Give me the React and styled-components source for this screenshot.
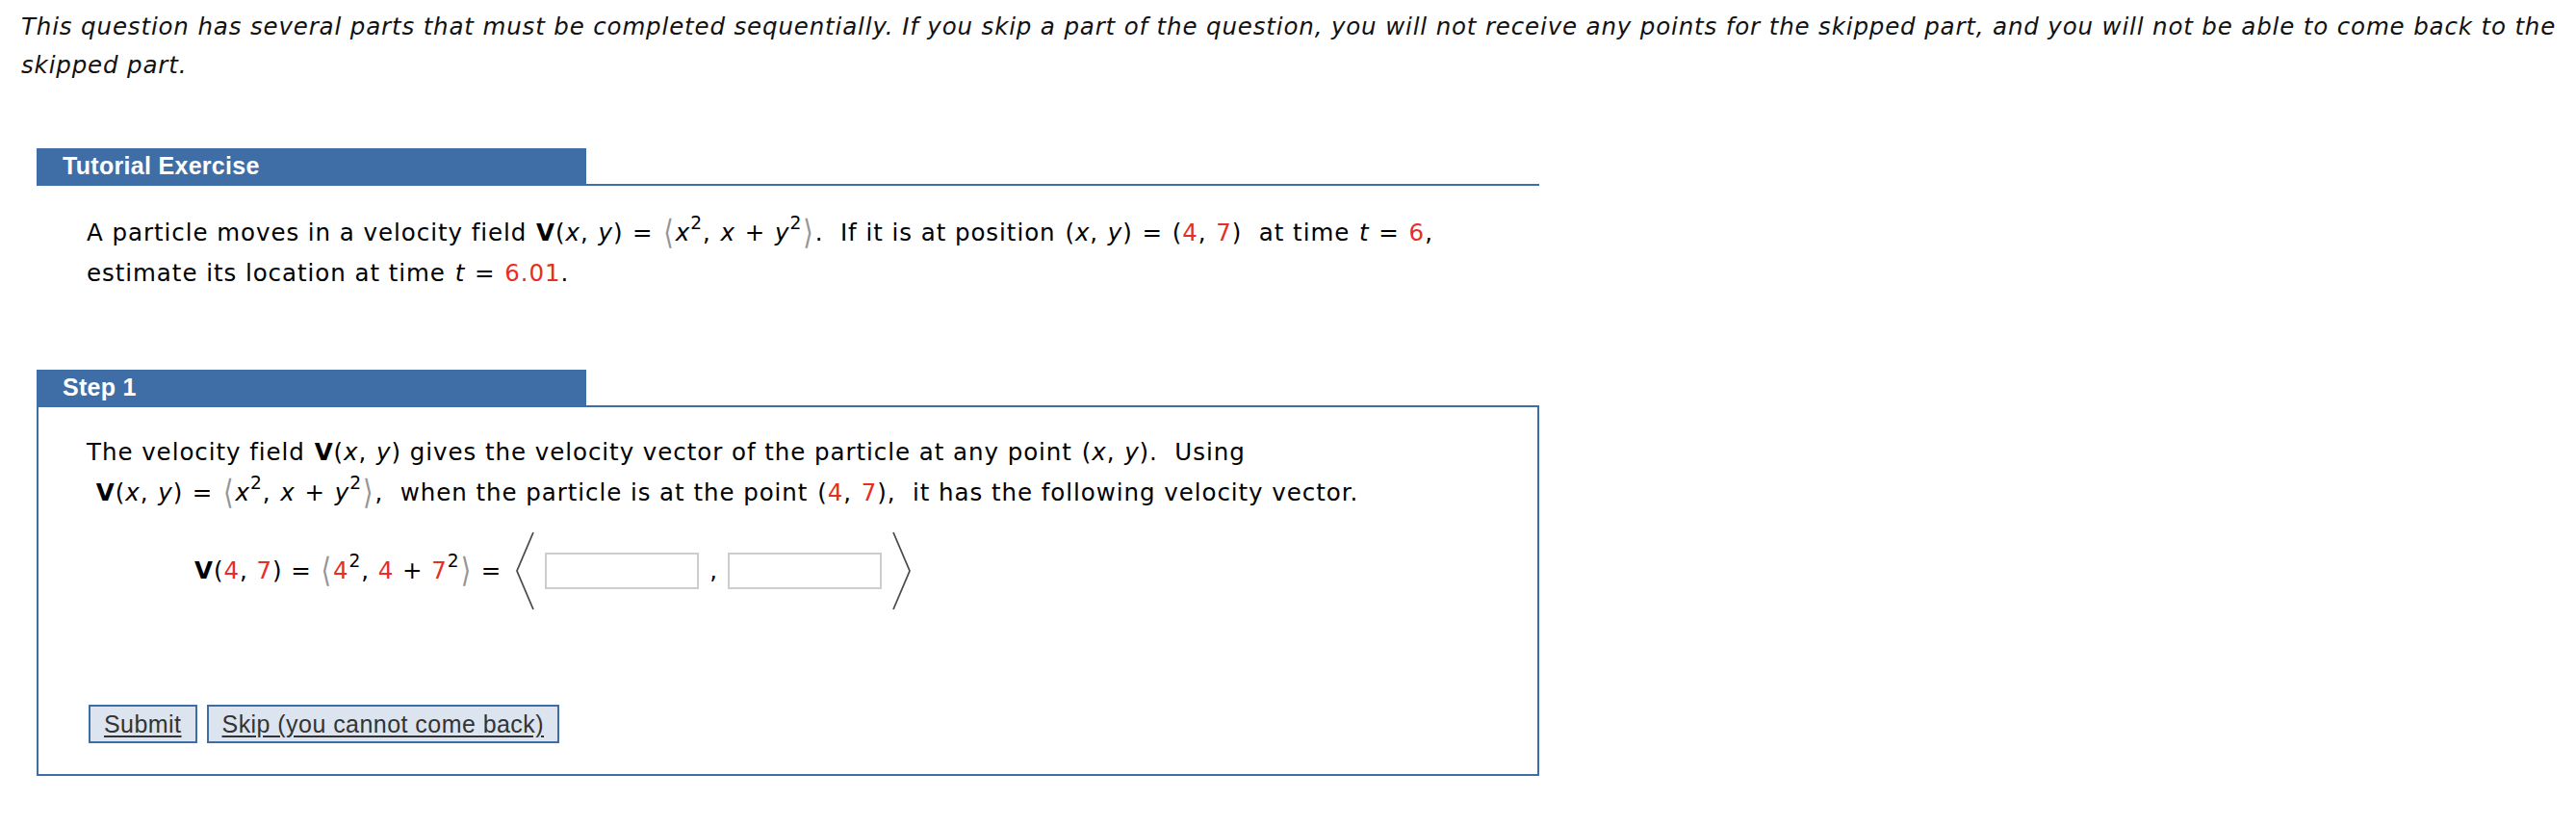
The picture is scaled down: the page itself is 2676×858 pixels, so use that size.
import styled, { createGlobalStyle } from "styled-components";

const GlobalStyle = createGlobalStyle`
  html, body {
    margin: 0;
    background: #fff;
    overflow: hidden;
  }
  body {
    font-family: "DejaVu Sans", Verdana, sans-serif;
    color: #000;
  }
`;

const BLUE = "#3f6ea6";
const RED = "#e62e24";

const Page = styled.div`
  padding: 8px 0 0 22px;
`;

const Intro = styled.p`
  margin: 0;
  font-size: 24.5px;
  line-height: 40px;
  letter-spacing: 0.85px;
  font-style: italic;
  color: #111;
  white-space: nowrap;
`;

const Section = styled.section`
  width: 1561px;
  margin: ${(p) => p.$top}px 0 0 16px;
`;

const Header = styled.div`
  display: flex;
  border-bottom: 2px solid ${BLUE};
`;

const Tab = styled.div`
  width: 571px;
  height: 37px;
  box-sizing: border-box;
  padding-left: 27px;
  background: ${BLUE};
  color: #fff;
  font-family: "Liberation Sans", Arial, sans-serif;
  font-weight: bold;
  font-size: 25px;
  letter-spacing: 0.3px;
  line-height: 37px;
`;

const Problem = styled.div`
  padding: 28px 0 0 52px;
`;

const StepBox = styled.div`
  border: 2px solid ${BLUE};
  border-top: none;
  padding: 26px 0 32px 50px;
`;

const Text = styled.p`
  margin: 0;
  font-size: 24.5px;
  line-height: 42px;
  letter-spacing: 0.95px;
  white-space: nowrap;
`;

const Math = styled.span`
  white-space: nowrap;
  margin-left: 0.4em;
  word-spacing: 1px;
`;

const Var = styled.i`
  font-style: italic;
`;

const Bold = styled.b`
  font-weight: bold;
`;

const Red = styled.span`
  color: ${RED};
`;

const Sup = styled.sup`
  font-size: 0.76em;
  vertical-align: 0.62em;
  line-height: 0;
`;

const Angle = styled.span`
  display: inline-block;
  color: #959595;
  font-size: 1.1em;
  line-height: 1;
  margin: 0 1px;
  transform: scaleY(1.3);
`;

const EquationRow = styled.div`
  display: flex;
  align-items: center;
  height: 84px;
  margin-top: 18px;
  padding-left: 112px;
  font-size: 24.5px;
  line-height: 42px;
  letter-spacing: 0.95px;
`;

const EqText = styled.span`
  white-space: nowrap;
  margin-right: 14px;
`;

const Slot = styled.input`
  width: 160px;
  height: 38px;
  box-sizing: border-box;
  border: 2px solid #cdcdcd;
  background: #fff;
  margin: 0 11px;
  padding: 0 6px;
  font: inherit;
`;

const Comma = styled.span`
  width: 8px;
`;

const ButtonRow = styled.div`
  display: flex;
  gap: 10px;
  margin-top: 97px;
  padding-left: 2px;
`;

const Button = styled.button`
  height: 40px;
  box-sizing: border-box;
  padding: 0 14px;
  border: 2px solid ${BLUE};
  background: #dce5ef;
  color: #333;
  font-family: "Liberation Sans", Arial, sans-serif;
  font-size: 25px;
  letter-spacing: 0.45px;
  line-height: 36px;
  text-decoration: underline;
  text-underline-offset: 3px;
  cursor: pointer;
`;

const Bracket = ({ right }) => (
  <svg width="20" height="82" viewBox="0 0 20 82">
    <path
      d={right ? "M1 1 L18 41 L1 81" : "M19 1 L2 41 L19 81"}
      fill="none"
      stroke="#4d4d4d"
      strokeWidth="1.8"
    />
  </svg>
);

const Field = () => (
  <>
    <Bold>V</Bold>(<Var>x</Var>, <Var>y</Var>) = <Angle>⟨</Angle>
    <Var>x</Var>
    <Sup>2</Sup>, <Var>x</Var> + <Var>y</Var>
    <Sup>2</Sup>
    <Angle>⟩</Angle>
  </>
);

export default function App() {
  return (
    <Page>
      <GlobalStyle />
      <Intro>
        This question has several parts that must be completed sequentially. If you skip a part of
        the question, you will not receive any points for the skipped part, and you will not be able
        to come back to the
        <br />
        skipped part.
      </Intro>

      <Section $top={66}>
        <Header>
          <Tab>Tutorial Exercise</Tab>
        </Header>
        <Problem>
          <Text>
            A particle moves in a velocity field
            <Math>
              <Field />
            </Math>
            .{"\u00a0 "}If it is at position
            <Math>
              (<Var>x</Var>, <Var>y</Var>) = (<Red>4</Red>, <Red>7</Red>)
            </Math>
            {"\u00a0 "}at time
            <Math>
              <Var>t</Var> = <Red>6</Red>
            </Math>
            ,
            <br />
            estimate its location at time
            <Math>
              <Var>t</Var> = <Red>6.01</Red>
            </Math>
            .
          </Text>
        </Problem>
      </Section>

      <Section $top={79}>
        <Header>
          <Tab>Step 1</Tab>
        </Header>
        <StepBox>
          <Text>
            The velocity field
            <Math>
              <Bold>V</Bold>(<Var>x</Var>, <Var>y</Var>)
            </Math>{" "}
            gives the velocity vector of the particle at any point
            <Math>
              (<Var>x</Var>, <Var>y</Var>)
            </Math>
            .{"\u00a0 "}Using
            <br />
            <Math>
              <Field />
            </Math>
            ,{"\u00a0 "}when the particle is at the point
            <Math>
              (<Red>4</Red>, <Red>7</Red>)
            </Math>
            ,{"\u00a0 "}it has the following velocity vector.
          </Text>

          <EquationRow>
            <EqText>
              <Bold>V</Bold>(<Red>4</Red>, <Red>7</Red>) = <Angle>⟨</Angle>
              <Red>4</Red>
              <Sup>2</Sup>, <Red>4</Red> + <Red>7</Red>
              <Sup>2</Sup>
              <Angle>⟩</Angle> =
            </EqText>
            <Bracket />
            <Slot type="text" aria-label="first component" />
            <Comma>,</Comma>
            <Slot type="text" aria-label="second component" />
            <Bracket right />
          </EquationRow>

          <ButtonRow>
            <Button type="button">Submit</Button>
            <Button type="button">Skip (you cannot come back)</Button>
          </ButtonRow>
        </StepBox>
      </Section>
    </Page>
  );
}
